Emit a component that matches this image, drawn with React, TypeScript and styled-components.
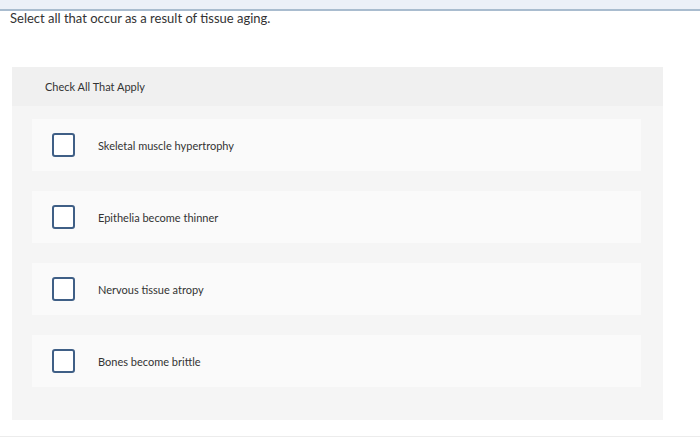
import styled, { createGlobalStyle } from 'styled-components';

const GlobalStyle = createGlobalStyle`
    body {
        margin: 0;
        background: #ffffff;
        font-family: Lato, "Open Sans", Arial, sans-serif;
        color: #333333;
    }
`;

const options = [
    'Skeletal muscle hypertrophy',
    'Epithelia become thinner',
    'Nervous tissue atropy',
    'Bones become brittle',
];

export default function App() {
    return (
        <>
            <GlobalStyle />
            <TopBar />
            <Question>Select all that occur as a result of tissue aging.</Question>
            <Panel>
                <PanelHeader>Check All That Apply</PanelHeader>
                <OptionList>
                    {options.map((o) => (
                        <OptionCard key={o}>
                            <CheckBox />
                            <OptionText>{o}</OptionText>
                        </OptionCard>
                    ))}
                </OptionList>
            </Panel>
            <BottomLine />
        </>
    );
}

const TopBar = styled.div`
    height: 9px;
    background: #ecf0f8;
    border-bottom: 2px solid #a9bccf;
`;

const Question = styled.p`
    margin: 0;
    padding: 0 10px;
    font-size: 13px;
    line-height: 15px;
    color: #333333;
`;

const Panel = styled.div`
    margin: 41px 0 0 12px;
    width: 651px;
    background: #f5f5f5;
`;

const PanelHeader = styled.div`
    height: 39px;
    display: flex;
    align-items: center;
    padding-left: 33px;
    background: #f0f0f0;
    font-size: 11px;
    color: #333333;
`;

const OptionList = styled.div`
    display: flex;
    flex-direction: column;
    gap: 20px;
    padding: 13px 22px 33px 20px;
`;

const OptionCard = styled.div`
    height: 52px;
    display: flex;
    align-items: center;
    gap: 23px;
    padding-left: 20px;
    background: #fafafa;
`;

const CheckBox = styled.div`
    width: 23px;
    height: 24px;
    box-sizing: border-box;
    border: 2px solid #3f5f86;
    border-radius: 3px;
    background: #ffffff;
`;

const OptionText = styled.span`
    font-size: 11px;
    color: #333333;
`;

const BottomLine = styled.div`
    margin-top: 16px;
    height: 1px;
    background: #ececec;
`;
